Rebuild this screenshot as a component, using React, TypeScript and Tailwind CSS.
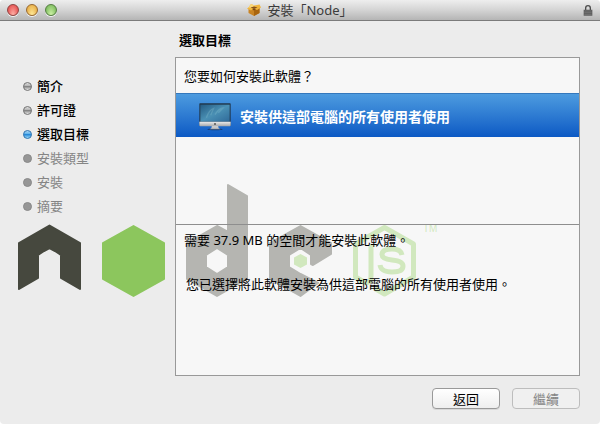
import React from 'react';

interface Step {
  label: string;
  state: 'done' | 'current' | 'pending';
}

const steps: Step[] = [
  { label: '簡介', state: 'done' },
  { label: '許可證', state: 'done' },
  { label: '選取目標', state: 'current' },
  { label: '安裝類型', state: 'pending' },
  { label: '安裝', state: 'pending' },
  { label: '摘要', state: 'pending' },
];

const StepDot: React.FC<{ state: Step['state'] }> = ({ state }) => {
  if (state === 'pending') {
    return <span className="size-[9px] rounded-full bg-[#969696] border border-[#8a8a8a]" />;
  }
  const current = state === 'current';
  return (
    <svg viewBox="0 0 18 18" className="size-[9px] overflow-visible" aria-hidden="true">
      <defs>
        <linearGradient id={`dot-${state}`} x1="0" y1="0" x2="0" y2="1">
          <stop offset="0" stopColor={current ? '#b9dcf7' : '#e6e6e6'} />
          <stop offset="0.45" stopColor={current ? '#56aeea' : '#b0b0b0'} />
          <stop offset="0.5" stopColor={current ? '#2889d8' : '#858585'} />
          <stop offset="1" stopColor={current ? '#a4e2ff' : '#f4f4f4'} />
        </linearGradient>
      </defs>
      <circle cx="9" cy="9" r="8" fill={`url(#dot-${state})`} stroke={current ? '#3474ad' : '#737373'} strokeWidth="2" />
    </svg>
  );
};

const TrafficLight: React.FC<{ label: string; className: string }> = ({ label, className }) => (
  <button
    aria-label={label}
    className={`size-3 rounded-full border shadow-[0_1px_0_#f2f2f2] bg-radial-[at_50%_100%] ${className}`}
  />
);

const PackageIcon = () => (
  <svg viewBox="0 0 28 28" className="size-[14px]" aria-hidden="true">
    <path d="M3 10 14 6 25 10V20L14 26 3 20Z" fill="#c98424" />
    <path d="M14 15 25 10V20L14 26Z" fill="#a9650f" />
    <path d="M5 10 14 6 23 10 14 15Z" fill="#7c4a12" />
    <path d="M3 9 8 2 15 5 25 3 28 9 20 14 14 11 8 15 0 11Z" fill="#f0b53c" />
    <path d="M3 9 8 2 15 5 10 10Z" fill="#fbd775" />
    <path d="M7 9 14 7 21 9 14 12Z" fill="#85511a" />
  </svg>
);

const LockIcon = () => (
  <svg viewBox="0 0 30 33" className="w-[10px] h-[11px]" aria-label="已鎖定">
    <path d="M8 15V9a7 7 0 0 1 14 0v6" fill="none" stroke="#4c4c4c" strokeWidth="4" />
    <path d="M2 14h26v18H2Z" fill="#5c5c5c" />
    <path d="M4 18h22M4 23h22M4 28h22" stroke="#7d7d7d" strokeWidth="2" />
  </svg>
);

const MonitorIcon = () => (
  <svg viewBox="0 0 96 84" className="w-8 h-7" aria-hidden="true">
    <defs>
      <linearGradient id="screen" x1="0" y1="0" x2="1" y2="1">
        <stop offset="0" stopColor="#245b83" />
        <stop offset="0.5" stopColor="#4a90b4" />
        <stop offset="1" stopColor="#2f6a9a" />
      </linearGradient>
      <linearGradient id="metal" x1="0" y1="0" x2="0" y2="1">
        <stop offset="0" stopColor="#ededed" />
        <stop offset="1" stopColor="#a2a5a8" />
      </linearGradient>
    </defs>
    <ellipse cx="48" cy="79" rx="23" ry="3" fill="#123c78" />
    <path d="M39 67h18l2 9 6 3H31l6-3Z" fill="url(#metal)" />
    <rect x="1" y="1" width="94" height="68" rx="2" fill="#20364a" />
    <rect x="4" y="5" width="88" height="51" fill="url(#screen)" />
    <path d="M22 44Q31 20 44 16L35 37M48 35Q59 16 72 15L58 29" fill="none" stroke="#80b9cc" strokeWidth="4" opacity=".35" />
    <path d="M1 56h94v11q0 3-3 3H4q-3 0-3-3Z" fill="url(#metal)" />
    <circle cx="48" cy="63" r="3" fill="#555" />
  </svg>
);

const NodeLogo = () => (
  <svg
    viewBox="18 184 420 114"
    className="absolute left-[18px] top-[163px] w-[420px] h-[114px]"
    aria-hidden="true"
  >
    <g fill="#46483e" stroke="#46483e" strokeWidth="2" strokeLinejoin="round">
      <path d="M19 243 49.500 225.500 80 243V289L61 278V255L55 251 49.500 248 44 251 38 255V278L19 289Z" />
      <path
        fillRule="evenodd"
        d="M187 243 217 226 228 232V185L247 196V279L217 296 187 279ZM217 248 206 255V267L217 274 228 267V255Z"
      />
      <path d="M270 243 300.500 226 331 243V254L313 265 311 264V255L300.500 248 289 255V267L300.500 274 318 283 300.500 296 270 279Z" />
    </g>
    <g fill="#8cc65d">
      <path d="M103 243 133.500 226 164 243V279L133.500 296 103 279Z" stroke="#8cc65d" strokeWidth="2" strokeLinejoin="round" />
      <path d="M300.500 254 307 257.500V264.500L300.500 268 294 264.500V257.500Z" />
    </g>
    <g fill="none" stroke="#8cc65d" strokeWidth="5" strokeLinejoin="round">
      <path d="M371 245V276Q371 284 364 282L355.500 277V244L384.500 227.500 413.500 244V277L384.500 294 375 288.500" />
      <path d="M402 255Q401 249 392 249 382 249 382 254.500 382 259 392 260 403 261 403 266 403 272 392 272 381 272 380 265" />
    </g>
    <text x="423" y="232" fill="#8cc65d" fontSize="10" fontFamily="Liberation Sans, sans-serif">TM</text>
  </svg>
);

export default function App() {
  return (
    <div className="min-h-screen bg-white">
      <main className="relative min-h-screen flex flex-col overflow-hidden rounded-[4px] bg-[#ececec] font-['Noto_Sans','Noto_Sans_CJK_TC',sans-serif] text-[13px] leading-5 text-black">
        <header className="h-[21px] shrink-0 flex items-center justify-between px-[7px] border-b border-[#7b7b7b] bg-linear-to-b from-[#eeeeee] via-[#d4d4d4] to-[#b5b5b5]">
          <div className="flex flex-1 gap-[7px]">
            <TrafficLight label="關閉" className="border-[#8e4340] from-[#ffb5aa] to-[#e0393c]" />
            <TrafficLight label="最小化" className="border-[#96672f] from-[#ffeb9c] to-[#e2a032]" />
            <TrafficLight label="縮放" className="border-[#557d42] from-[#d0f3a8] to-[#6bb04e]" />
          </div>
          <h1 className="flex items-center gap-[6px] text-[#3b3b3b]">
            <PackageIcon />
            安裝「Node」
          </h1>
          <div className="flex flex-1 justify-end">
            <LockIcon />
          </div>
        </header>

        <div className="relative flex-1 flex flex-col">
          <NodeLogo />
          <div className="relative flex-1 flex pr-5">
            <nav className="w-[175px] shrink-0 pl-[23px] pt-[53px]">
              <ol>
                {steps.map((step) => (
                  <li
                    key={step.label}
                    className={`h-6 flex items-center gap-[5px] ${step.state === 'pending' ? 'text-[#858585]' : 'font-medium'}`}
                  >
                    <StepDot state={step.state} />
                    {step.label}
                  </li>
                ))}
              </ol>
            </nav>

            <section className="flex-1 flex flex-col">
              <h2 className="h-9 pt-[9px] pl-1 font-bold">選取目標</h2>
              <div className="flex-1 flex flex-col border border-[#999999] bg-white/60">
                <p className="h-[35px] flex items-center pl-2">您要如何安裝此軟體？</p>
                <button className="h-11 flex items-center gap-[9px] pl-[23px] pt-[2px] border-t border-[#3478bd] bg-linear-to-b from-[#4d9bdf] to-[#0b59c4] text-left text-sm font-bold text-white">
                  <MonitorIcon />
                  安裝供這部電腦的所有使用者使用
                </button>
                <div className="h-[88px] border-b border-[#8e8e8e]" />
                <div className="flex flex-col gap-6 px-2 py-[5px]">
                  <p>需要 37.9 MB 的空間才能安裝此軟體。</p>
                  <p className="pl-[2px]">您已選擇將此軟體安裝為供這部電腦的所有使用者使用。</p>
                </div>
              </div>
            </section>
          </div>

          <footer className="relative flex justify-end gap-3 pt-3 pr-5 pb-[15px]">
            <button className="w-[68px] h-[21px] flex items-center justify-center rounded-[4px] border border-[#999999] bg-linear-to-b from-white via-[#f7f7f7] to-[#eeeeee] shadow-[0_1px_0_#d8d8d8]">
              返回
            </button>
            <button
              disabled
              className="w-[68px] h-[21px] flex items-center justify-center rounded-[4px] border border-[#bdbdbd] bg-[#f0f0f0] text-[#858585]"
            >
              繼續
            </button>
          </footer>
        </div>
      </main>
    </div>
  );
}
